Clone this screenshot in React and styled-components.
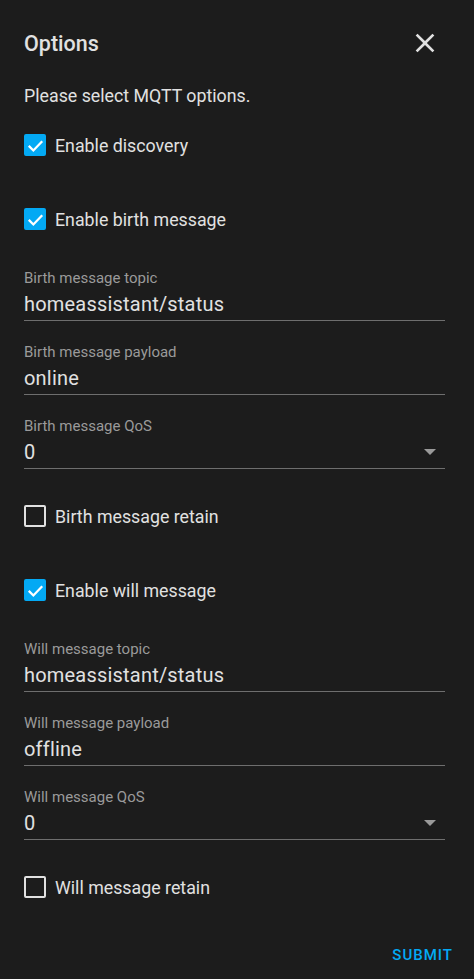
import styled, { createGlobalStyle } from "styled-components";

const GlobalStyle = createGlobalStyle`
    html, body {
        margin: 0;
        padding: 0;
        background: #1c1c1c;
    }
    * {
        box-sizing: border-box;
    }
`

const StyledDialog = styled.section`
    width: 474px;
    min-height: 979px;
    background: #1c1c1c;
    color: #e1e1e1;
    font-family: Roboto, "Noto Sans", sans-serif;
    display: flex;
    flex-direction: column;
`
const StyledHeader = styled.header`
    height: 86px;
    padding: 0 0 0 24px;
    display: flex;
    align-items: center;
    justify-content: space-between;
`
const StyledTitle = styled.h1`
    margin: 0;
    font-size: 21.5px;
    font-weight: 500;
    color: #e1e1e1;
`
const StyledClose = styled.button`
    width: 32px;
    height: 32px;
    margin-right: 33px;
    padding: 0;
    border: none;
    background: none;
    color: #e1e1e1;
    display: flex;
    align-items: center;
    justify-content: center;
`
const StyledContent = styled.div`
    padding: 0 29px 0 24px;
    display: flex;
    flex-direction: column;
`
const StyledDescription = styled.p`
    margin: -2px 0 17px;
    font-size: 17.8px;
    line-height: 24px;
`
const StyledCheckRow = styled.label`
    height: 40px;
    margin-top: ${(p) => p.$gap || 0}px;
    display: flex;
    align-items: center;
    gap: 9px;
    font-size: 17.8px;
`
const StyledBox = styled.span`
    width: 22px;
    height: 22px;
    border-radius: 2px;
    border: 2px solid ${(p) => (p.$checked ? "#03a9f4" : "#e1e1e1")};
    background: ${(p) => (p.$checked ? "#03a9f4" : "transparent")};
    display: flex;
    align-items: center;
    justify-content: center;
`
const StyledFields = styled.div`
    margin-top: 29px;
    display: flex;
    flex-direction: column;
    gap: 21px;
`
const StyledField = styled.div`
    display: flex;
    flex-direction: column;
    border-bottom: 1px solid rgba(225, 225, 225, 0.42);
`
const StyledFieldLabel = styled.span`
    font-size: 15px;
    line-height: 20px;
    color: #9a9a9a;
`
const StyledFieldValue = styled.div`
    height: 32px;
    display: flex;
    align-items: center;
    justify-content: space-between;
    font-size: 20px;
    letter-spacing: 0.2px;
    color: #e1e1e1;
`
const StyledArrow = styled.span`
    width: 0;
    height: 0;
    margin-right: 9px;
    border-left: 6px solid transparent;
    border-right: 6px solid transparent;
    border-top: 6px solid #9a9a9a;
`
const StyledFooter = styled.footer`
    margin-top: 30px;
    padding-right: 21px;
    display: flex;
    justify-content: flex-end;
`
const StyledSubmit = styled.button`
    height: 36px;
    padding: 0;
    border: none;
    background: none;
    color: #03a9f4;
    font-family: Roboto, "Noto Sans", sans-serif;
    font-size: 15px;
    font-weight: 500;
    letter-spacing: 1px;
`

const Checkbox = ({ checked, label, gap }) => (
    <StyledCheckRow $gap={gap}>
        <StyledBox $checked={checked}>
            {checked && (
                <svg width="17" height="17" viewBox="0 0 24 24">
                    <path d="M2.5 12.5 L9 19 L21.5 6" fill="none" stroke="#fff" strokeWidth="3.2" />
                </svg>
            )}
        </StyledBox>
        {label}
    </StyledCheckRow>
)

const Field = ({ label, value, select }) => (
    <StyledField>
        <StyledFieldLabel>{label}</StyledFieldLabel>
        <StyledFieldValue>
            {value}
            {select && <StyledArrow />}
        </StyledFieldValue>
    </StyledField>
)

const App = () => {
    return (
        <StyledDialog>
            <GlobalStyle />
            <StyledHeader>
                <StyledTitle>Options</StyledTitle>
                <StyledClose aria-label="Close">
                    <svg width="32" height="32" viewBox="0 0 24 24">
                        <path fill="currentColor" d="M19,6.41L17.59,5L12,10.59L6.41,5L5,6.41L10.59,12L5,17.59L6.41,19L12,13.41L17.59,19L19,17.59L13.41,12L19,6.41Z" />
                    </svg>
                </StyledClose>
            </StyledHeader>
            <StyledContent>
                <StyledDescription>Please select MQTT options.</StyledDescription>
                <Checkbox checked label="Enable discovery" />
                <Checkbox checked label="Enable birth message" gap={34} />
                <StyledFields>
                    <Field label="Birth message topic" value="homeassistant/status" />
                    <Field label="Birth message payload" value="online" />
                    <Field label="Birth message QoS" value="0" select />
                </StyledFields>
                <Checkbox label="Birth message retain" gap={27} />
                <Checkbox checked label="Enable will message" gap={34} />
                <StyledFields>
                    <Field label="Will message topic" value="homeassistant/status" />
                    <Field label="Will message payload" value="offline" />
                    <Field label="Will message QoS" value="0" select />
                </StyledFields>
                <Checkbox label="Will message retain" gap={27} />
            </StyledContent>
            <StyledFooter>
                <StyledSubmit>SUBMIT</StyledSubmit>
            </StyledFooter>
        </StyledDialog>
    )
}

export default App
